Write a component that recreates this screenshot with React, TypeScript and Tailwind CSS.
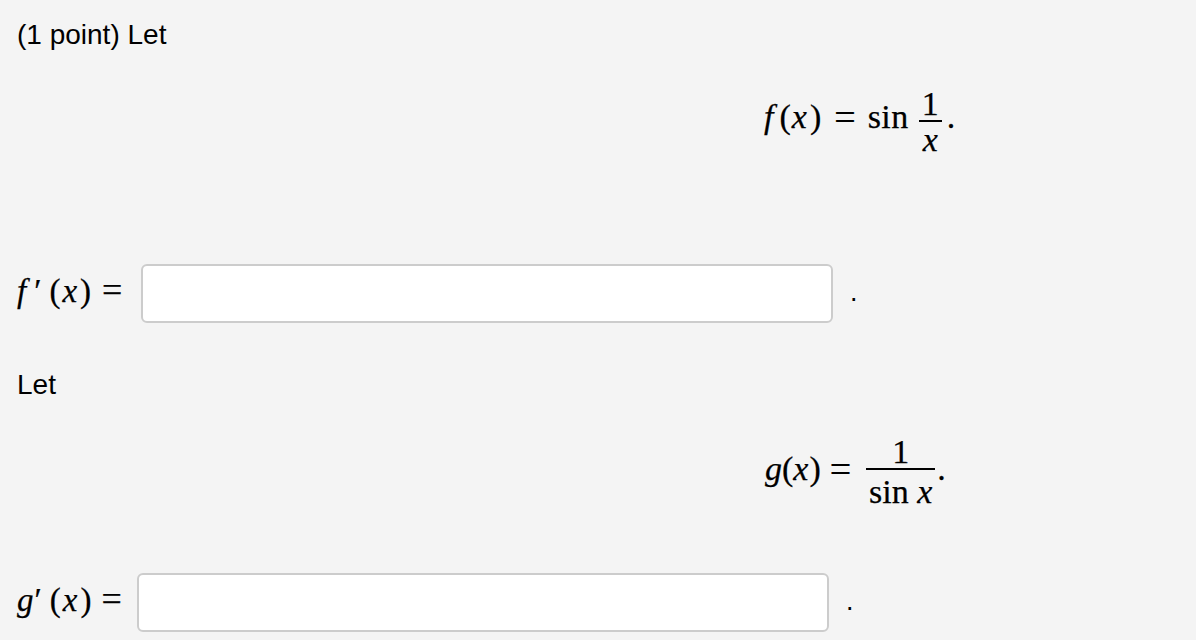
import React from "react";

const serif = "font-['Liberation_Serif','Times_New_Roman',serif] [-webkit-text-stroke:0.25px_black]";
const sans = "font-['Liberation_Sans',Arial,sans-serif]";

// fraction with the bar at the middle of its box
const Frac = ({
  num,
  den,
  numClass,
  denClass,
  barClass,
}: {
  num: React.ReactNode;
  den: React.ReactNode;
  numClass: string;
  denClass: string;
  barClass: string;
}) => (
  <span className="inline-flex flex-col items-stretch">
    <span className={`flex justify-center leading-[32px] ${numClass}`}>{num}</span>
    <span className={`h-[1.5px] bg-black ${barClass}`} />
    <span className={`flex justify-center leading-[32px] ${denClass}`}>{den}</span>
  </span>
);

const AnswerRow = ({
  label,
  labelWidth,
  inputClass,
}: {
  label: React.ReactNode;
  labelWidth: string;
  inputClass: string;
}) => (
  <div className="flex items-center h-[59px]">
    <span
      className={`${serif} text-[33px] leading-[30px] mb-[6px] whitespace-nowrap flex items-baseline ${labelWidth}`}
    >
      {label}
    </span>
    <input
      type="text"
      className={`h-[59px] bg-white border-2 border-[#cccccc] rounded-[6px] outline-none px-3 text-[20px] ${inputClass}`}
    />
    <span className={`${sans} text-[27px] leading-[30px] mb-[4px] ml-[17px]`}>.</span>
  </div>
);

export default function App() {
  return (
    <div className="min-h-screen bg-[#f4f4f4] text-black px-[17px] pt-[19px] overflow-hidden">
      <p className={`${sans} text-[28px] leading-[32px]`}>(1 point) Let</p>

      {/* f(x) = sin 1/x */}
      <div className={`${serif} text-[34px] flex items-center h-[62px] mt-[35px] pl-[747px]`}>
        <span className="leading-[30px] whitespace-nowrap">
          <i className="mr-[6px]">f</i>
          <span>(</span>
          <i className="ml-[1px] mr-[3px]">x</i>)
        </span>
        <span className="leading-[30px] text-[38px] ml-[13px] mr-[12px]">=</span>
        <span className="leading-[30px] tracking-[0.5px]">sin</span>
        <span className="ml-[10px]">
          <Frac
            num={<span>1</span>}
            den={<i>x</i>}
            numClass="pt-[2px]"
            denClass="pt-[2px]"
            barClass="w-[23px]"
          />
        </span>
        <span className="leading-[30px] ml-[5px]">.</span>
      </div>

      <div className="mt-[116px]">
        <AnswerRow
          labelWidth="w-[124px]"
          label={
            <>
              <i>f</i>
              <span className="ml-[8px] mr-[8px]">′</span>
              <span>(</span>
              <i className="ml-[2px] mr-[3px]">x</i>
              <span>)</span>
              <span className="text-[36px] ml-[11px]">=</span>
            </>
          }
          inputClass="w-[692px]"
        />
      </div>

      <p className={`${sans} text-[28px] leading-[32px] mt-[46px]`}>Let</p>

      {/* g(x) = 1/sin x */}
      <div className={`${serif} text-[34px] flex items-center h-[62px] mt-[37px] pl-[748px]`}>
        <span className="leading-[30px] whitespace-nowrap">
          <i>g</i>
          <span>(</span>
          <i className="mr-[1px]">x</i>)
        </span>
        <span className="leading-[30px] text-[38px] ml-[9px] mr-[15px]">=</span>
        <Frac
          num={<span>1</span>}
          den={
            <span className="whitespace-nowrap">
              sin <i>x</i>
            </span>
          }
          numClass="pt-[6px]"
          denClass="pt-[6px]"
          barClass="w-[69px]"
        />
        <span className="leading-[30px] ml-[2px]">.</span>
      </div>

      <div className="mt-[73px]">
        <AnswerRow
          labelWidth="w-[120px]"
          label={
            <>
              <i>g</i>
              <span className="ml-[1px] mr-[8px]">′</span>
              <span>(</span>
              <i className="ml-[2px] mr-[3px]">x</i>
              <span>)</span>
              <span className="text-[36px] ml-[10px]">=</span>
            </>
          }
          inputClass="w-[692px]"
        />
      </div>
    </div>
  );
}
